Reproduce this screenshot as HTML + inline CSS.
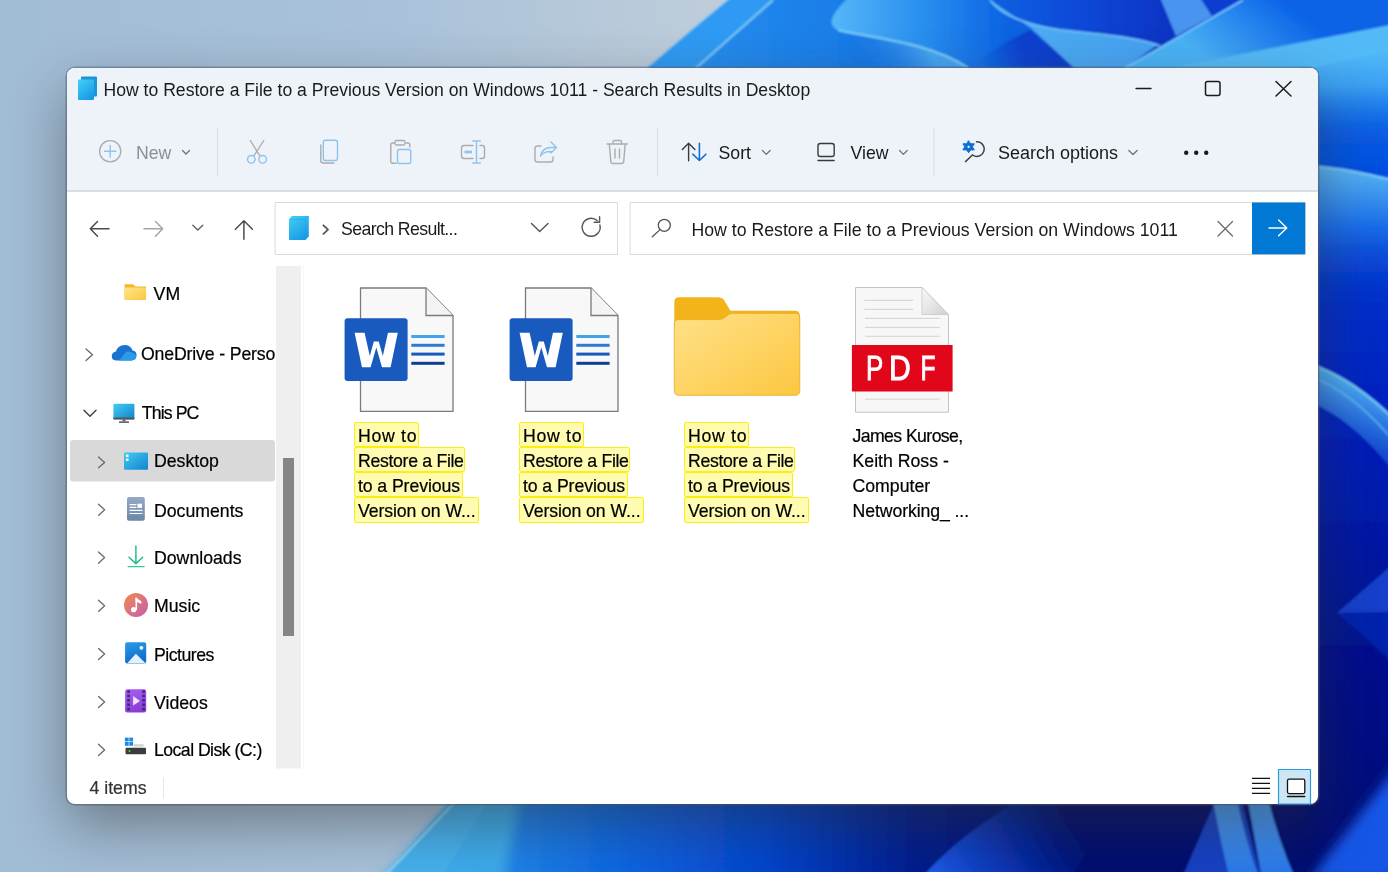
<!DOCTYPE html>
<html><head><meta charset="utf-8">
<style>
*{margin:0;padding:0;box-sizing:border-box}
html,body{width:1388px;height:872px;overflow:hidden;font-family:"Liberation Sans",sans-serif;color:#000;background:#a4bdd7}
svg{position:absolute;left:0;top:0}
#win{position:absolute;left:67px;top:68px;width:1251px;height:736px;border-radius:8px;background:#fff;overflow:hidden;box-shadow:0 22px 56px rgba(48,48,48,.48),0 0 0 1.5px rgba(90,105,135,.55),inset 0 1px 0 #f7fafd}
#top{position:absolute;left:0;top:0;width:1251px;height:124px;background:#eef3f9;border-bottom:2px solid #d9dee3}
.t{position:absolute;white-space:nowrap;font-size:17.7px;line-height:18px;height:18px;color:#1a1a1a}
.b{color:#000;-webkit-text-stroke:0.2px currentColor}
.hl{position:absolute;background:#fffbb0;border:1px solid #fbef10;border-radius:2px}
</style></head><body>
<svg width="1388" height="872" viewBox="0 0 1388 872">
<defs>
<linearGradient id="gl" x1="0" y1="0" x2="720" y2="0" gradientUnits="userSpaceOnUse">
<stop offset="0" stop-color="#a1bcd5"/><stop offset="0.55" stop-color="#a9c2da"/><stop offset="1" stop-color="#bfcdda"/>
</linearGradient>
<linearGradient id="gtop" x1="650" y1="0" x2="1388" y2="0" gradientUnits="userSpaceOnUse">
<stop offset="0" stop-color="#2a92f0"/><stop offset="0.25" stop-color="#1a7ee8"/><stop offset="0.47" stop-color="#0a5ee0"/><stop offset="0.6" stop-color="#0a48d8"/><stop offset="0.7" stop-color="#0838c8"/><stop offset="1" stop-color="#1664e2"/>
</linearGradient>
<linearGradient id="gp1" x1="830" y1="10" x2="1010" y2="10" gradientUnits="userSpaceOnUse">
<stop offset="0" stop-color="#56b8f8"/><stop offset="0.5" stop-color="#2a90f0"/><stop offset="1" stop-color="#0a62e2"/>
</linearGradient>
<linearGradient id="gp1b" x1="840" y1="0" x2="960" y2="0" gradientUnits="userSpaceOnUse"><stop offset="0" stop-color="#1a7ae8" stop-opacity="0"/><stop offset="1" stop-color="#44a4f0"/>
</linearGradient>
<linearGradient id="gp2" x1="990" y1="0" x2="1157" y2="50" gradientUnits="userSpaceOnUse">
<stop offset="0" stop-color="#52aef4"/><stop offset="1" stop-color="#44a2f2"/>
</linearGradient>
<linearGradient id="gp3" x1="1200" y1="55" x2="1260" y2="-20" gradientUnits="userSpaceOnUse">
<stop offset="0" stop-color="#4ab2f6"/><stop offset="0.5" stop-color="#2a8af0"/><stop offset="1" stop-color="#0a62e6"/>
</linearGradient>
<linearGradient id="gright" x1="0" y1="68" x2="0" y2="872" gradientUnits="userSpaceOnUse">
<stop offset="0" stop-color="#0658e4"/><stop offset="0.12" stop-color="#0450e0"/><stop offset="0.3" stop-color="#002ec8"/><stop offset="0.42" stop-color="#0022c0"/><stop offset="0.7" stop-color="#021290"/><stop offset="1" stop-color="#020e72"/>
</linearGradient>
<linearGradient id="gbot" x1="450" y1="0" x2="1388" y2="0" gradientUnits="userSpaceOnUse">
<stop offset="0" stop-color="#3aa2ea"/><stop offset="0.08" stop-color="#1c7ee6"/><stop offset="0.2" stop-color="#0a62e0"/><stop offset="0.34" stop-color="#0544cc"/><stop offset="0.5" stop-color="#031c8c"/><stop offset="0.65" stop-color="#021070"/><stop offset="1" stop-color="#020e72"/>
</linearGradient>
<linearGradient id="gband1" x1="0" y1="166" x2="0" y2="300" gradientUnits="userSpaceOnUse"><stop offset="0" stop-color="#5ab8f5"/><stop offset="0.45" stop-color="#1a6ee8"/><stop offset="1" stop-color="#0a38c8" stop-opacity="0"/></linearGradient>
<linearGradient id="gband2" x1="1340" y1="380" x2="1310" y2="460" gradientUnits="userSpaceOnUse"><stop offset="0" stop-color="#4aaaf2"/><stop offset="1" stop-color="#1a5ee0" stop-opacity=".2"/></linearGradient>
<linearGradient id="gdark" x1="990" y1="0" x2="1160" y2="0" gradientUnits="userSpaceOnUse"><stop offset="0" stop-color="#0a62e2"/><stop offset="0.5" stop-color="#0a4ad8"/><stop offset="1" stop-color="#0a36c6"/></linearGradient>
<filter id="bl2" x="-50%" y="-50%" width="200%" height="200%"><feGaussianBlur stdDeviation="6"/></filter>
<linearGradient id="gp4" x1="935" y1="880" x2="1060" y2="800" gradientUnits="userSpaceOnUse"><stop offset="0" stop-color="#1e5ce8"/><stop offset="0.45" stop-color="#0a3cc0" stop-opacity=".8"/><stop offset="1" stop-color="#0a2ab0" stop-opacity="0"/></linearGradient>
<linearGradient id="gst" x1="0" y1="803" x2="0" y2="872" gradientUnits="userSpaceOnUse"><stop offset="0" stop-color="#4a9cf2"/><stop offset="1" stop-color="#2a78ea"/></linearGradient>
<linearGradient id="gfade" x1="0" y1="50" x2="0" y2="170" gradientUnits="userSpaceOnUse"><stop offset="0" stop-color="#52baf8"/><stop offset="0.3" stop-color="#3aa0f2"/><stop offset="0.7" stop-color="#0a62e4" stop-opacity=".6"/><stop offset="1" stop-color="#0a5ae2" stop-opacity="0"/></linearGradient>
<linearGradient id="gdk2" x1="980" y1="68" x2="1060" y2="40" gradientUnits="userSpaceOnUse"><stop offset="0" stop-color="#0a56dc" stop-opacity="0"/><stop offset="0.5" stop-color="#0a44d2"/><stop offset="1" stop-color="#0a3cc8"/></linearGradient>
<linearGradient id="gp1c" x1="860" y1="75" x2="920" y2="38" gradientUnits="userSpaceOnUse"><stop offset="0" stop-color="#1a7ae8" stop-opacity="0"/><stop offset="1" stop-color="#48a8f2" stop-opacity=".95"/></linearGradient>
<filter id="bl" x="-5%" y="-5%" width="110%" height="110%"><feGaussianBlur stdDeviation="1.2"/></filter>
<radialGradient id="shadow" cx="0.5" cy="0.5" r="0.5"><stop offset="0" stop-color="#000" stop-opacity=".3"/><stop offset="1" stop-color="#000" stop-opacity="0"/></radialGradient>
</defs>
<rect width="1388" height="872" fill="url(#gl)"/>
<g filter="url(#bl)">
<!-- top blue region -->
<path d="M740 -10H1400V120H640L647 68L688 33L729 -1Z" fill="url(#gtop)"/>
<path d="M740 -10L785 -10L696 68L647 68L688 33L729 -1Z" fill="#2f9af3"/>
<path d="M773 0L696 68" stroke="#7ccaf8" stroke-width="2"/>
<path d="M740 -10L729 -1L688 33L647 68" stroke="#8ccff5" stroke-width="1.5" opacity=".6" fill="none"/>
<!-- petal1 upper -->
<path d="M848 -10L846 0C836 10 824 24 838 30C870 38 930 42 968 68L1074 68L1031 28C1010 20 996 10 985 -10Z" fill="url(#gp1)"/>
<!-- petal1 lower band -->

<path d="M838 30C870 38 930 42 968 68H845C842 55 839 40 838 30Z" fill="url(#gp1c)"/>
<path d="M838 30C870 38 930 42 968 68" stroke="#7ad0fa" stroke-width="2" fill="none"/>
<!-- dark zone -->
<path d="M985 -10H1161L1176 36L1157 45C1120 38 1060 30 1031 28Z" fill="url(#gdark)"/>
<path d="M968 68C985 55 1005 42 1030 30L1076 68Z" fill="url(#gdk2)"/>
<!-- petal2 band -->
<path d="M990 0C1000 14 1025 25 1060 30C1100 34 1140 38 1157 45L1125 68H1074L1031 28Z" fill="url(#gp2)"/>
<path d="M990 0C1000 14 1025 25 1060 30C1100 34 1140 38 1160 46" stroke="#6cc0f8" stroke-width="1.8" fill="none"/>
<!-- stripe -->
<path d="M1157 -10H1195L1212 16L1176 36Z" fill="#4a94f0"/>
<path d="M1195 -10H1260L1212 16Z" fill="#0a3ed0"/>
<!-- petal3 -->
<path d="M1125 68L1243 0L1260 -10H1400V100H1125Z" fill="url(#gp3)"/>
<path d="M1170 68L1400 23V110H1170Z" fill="#52baf8"/>
<path d="M1125 68L1243 0" stroke="#7ad0fa" stroke-width="1.5"/>
<!-- right strip -->
<path d="M1300 68H1400V880H1300Z" fill="url(#gright)"/><path d="M1300 71L1400 48V170H1300Z" fill="url(#gfade)"/>
<path d="M1300 166C1330 166 1360 172 1400 182V300H1300Z" fill="url(#gband1)"/>
<path d="M1300 166C1330 166 1360 172 1400 182" stroke="#7ad0fa" stroke-width="2" fill="none"/>
<path d="M1300 361C1340 372 1370 395 1400 425V480C1370 440 1340 412 1300 398Z" fill="url(#gband2)"/>
<path d="M1300 361C1340 372 1370 395 1400 425" stroke="#7ad0fa" stroke-width="2" fill="none"/><path d="M1300 372C1340 385 1370 412 1400 448" stroke="#6ac0f8" stroke-width="1.5" fill="none" opacity=".8"/>
<path d="M1337 613L1400 558V612Z" fill="#1a4ad8" opacity=".8"/><path d="M1337 613L1400 612V668Z" fill="#0a2ec0" opacity=".6"/>
<!-- bottom strip -->
<path d="M460 790H1318V880H380Z" fill="url(#gbot)"/>
<path d="M466 790L521 790L503 880L381 880Z" fill="#3eaaea" filter="url(#bl2)"/><path d="M466 790L495 790L440 880L381 880Z" fill="#44b0ec"/>
<path d="M466 790L381 880" stroke="#90d8f5" stroke-width="2"/>
<path d="M920 880C950 845 990 815 1030 795H1130C1100 830 1080 860 1070 880Z" fill="url(#gp4)"/><path d="M1181 880L1218 795H1240L1262 880Z" fill="#1a50e0" opacity=".75"/>
<path d="M1212 795H1236Q1245 840 1260 880H1230Q1220 840 1212 795Z" fill="url(#gst)"/>
<path d="M1247 795H1267Q1278 840 1296 880H1262Q1255 840 1247 795Z" fill="url(#gst)"/>
<path d="M1310 880C1340 840 1370 800 1400 765V880Z" fill="#1656e6" filter="url(#bl2)"/>
</g>
</svg>
<div id="win"><div id="top"></div></div>
<svg width="1388" height="872" viewBox="0 0 1388 872" fill="none" stroke-linecap="round" stroke-linejoin="round">
<defs>
<linearGradient id="appf" x1="0" y1="0" x2="0.6" y2="1"><stop offset="0" stop-color="#43d0f5"/><stop offset="1" stop-color="#1a9be6"/></linearGradient>
<linearGradient id="fold" x1="0" y1="0" x2="1" y2="1"><stop offset="0" stop-color="#ffe58a"/><stop offset="1" stop-color="#fcc63e"/></linearGradient>
<linearGradient id="mon" x1="0" y1="0" x2="1" y2="1"><stop offset="0" stop-color="#3fd0f0"/><stop offset="1" stop-color="#1580d0"/></linearGradient>
<linearGradient id="docg" x1="0" y1="0" x2="0" y2="1"><stop offset="0" stop-color="#94aac6"/><stop offset="1" stop-color="#6c86a8"/></linearGradient>
<linearGradient id="picg" x1="0" y1="0" x2="0.3" y2="1"><stop offset="0" stop-color="#2a9ce8"/><stop offset="1" stop-color="#0e6ccc"/></linearGradient>
<linearGradient id="vidg" x1="0" y1="0" x2="0.3" y2="1"><stop offset="0" stop-color="#a462f0"/><stop offset="1" stop-color="#8a3ed8"/></linearGradient>
<linearGradient id="mus" x1="0" y1="0" x2="1" y2="1"><stop offset="0" stop-color="#f28a50"/><stop offset="1" stop-color="#c55bb0"/></linearGradient>
</defs>
<!-- title app icon -->
<rect x="81" y="76.5" width="16" height="20" rx="1" fill="#1a96d8"/>
<rect x="78" y="79.5" width="16" height="20.5" rx="1" fill="url(#appf)"/>
<!-- window controls -->
<path d="M1136 88.5H1151" stroke="#1b1b1b" stroke-width="1.3"/>
<rect x="1205.5" y="81.5" width="14.5" height="14" rx="2" stroke="#1b1b1b" stroke-width="1.5"/>
<path d="M1276 81.5L1291 96M1291 81.5L1276 96" stroke="#1b1b1b" stroke-width="1.5"/>
<!-- New -->
<circle cx="110.2" cy="151.2" r="10.6" stroke="#a9acb0" stroke-width="1.3"/>
<path d="M110.2 145.5V157M104.5 151.2H116" stroke="#8ec3ee" stroke-width="1.4"/>
<path d="M182.5 150.5L186 154L189.5 150.5" stroke="#6a6d70" stroke-width="1.2"/>
<path d="M217.5 128V176" stroke="#d9dee4" stroke-width="1.2"/>
<!-- cut -->
<path d="M250.3 140.5L260 156M263.8 140.5L253.8 156" stroke="#a9a9a9" stroke-width="1.3"/>
<circle cx="251.3" cy="159.3" r="3.8" stroke="#8ec3ee" stroke-width="1.4"/>
<circle cx="262.7" cy="159.3" r="3.8" stroke="#8ec3ee" stroke-width="1.4"/>
<!-- copy -->
<path d="M320.8 145V160.5Q320.8 163 323.5 163H334" stroke="#acacac" stroke-width="1.4"/>
<rect x="323.3" y="140.2" width="14.2" height="20.3" rx="2.3" stroke="#8ec3ee" stroke-width="1.4"/>
<!-- paste -->
<path d="M394.5 143H392.5Q390.8 143 390.8 145V161.5Q390.8 163.3 392.5 163.3H396M406 143H408Q409.8 143 409.8 145V147" stroke="#acacac" stroke-width="1.4"/>
<rect x="395" y="140.5" width="10" height="4.5" rx="1.5" stroke="#acacac" stroke-width="1.3"/>
<rect x="397.5" y="149.5" width="13.3" height="14" rx="2" stroke="#8ec3ee" stroke-width="1.4"/>
<!-- rename -->
<path d="M473 145.5H464Q461.5 145.5 461.5 148V156Q461.5 158.5 464 158.5H473M480 145.5H482Q484.5 145.5 484.5 148V156Q484.5 158.5 482 158.5H480" stroke="#acacac" stroke-width="1.4"/>
<path d="M476.5 141V163M472.8 141H480.2M472.8 163H480.2" stroke="#8ec3ee" stroke-width="1.5"/>
<path d="M464.5 152H472" stroke="#8ec3ee" stroke-width="2.6" stroke-linecap="butt"/>
<!-- share -->
<path d="M541 146H537.5Q535 146 535 148.5V159.5Q535 162 537.5 162H550.5Q553 162 553 159.5V157" stroke="#acacac" stroke-width="1.4"/>
<path d="M551 142L556.5 147.5L551 153M556 147.5H551Q542.5 147.5 540.5 156Q543.5 151.5 551 151.5" stroke="#8ec3ee" stroke-width="1.4"/>
<!-- delete -->
<path d="M607 144H627.5M613 144V142Q613 140.5 614.5 140.5H620Q621.5 140.5 621.5 142V144M609.3 144L610.8 161.5Q611 163.5 613 163.5H621.5Q623.5 163.5 623.7 161.5L625.2 144M615 149V158M619.5 149V158" stroke="#acacac" stroke-width="1.4"/>
<path d="M657.5 128V176" stroke="#d9dee4" stroke-width="1.2"/>
<!-- sort -->
<path d="M688.6 143.3V160.7M682.3 149.6L688.6 143.3L694.9 149.6" stroke="#3a3a3a" stroke-width="1.4"/>
<path d="M699.4 143.3V160.5M692.8 154.2L699.4 160.5L705.9 154.2" stroke="#0f6fd4" stroke-width="1.6"/>
<path d="M762.5 150.5L766.3 154.3L770.1 150.5" stroke="#6a6d70" stroke-width="1.2"/>
<!-- view -->
<rect x="818" y="143.5" width="16.2" height="13" rx="2.3" stroke="#3a3a3a" stroke-width="1.4"/>
<path d="M818 160.5H834.2" stroke="#3a3a3a" stroke-width="1.4"/>
<path d="M899.6 150.5L903.4 154.3L907.2 150.5" stroke="#6a6d70" stroke-width="1.2"/>
<path d="M933.9 128V176" stroke="#d9dee4" stroke-width="1.2"/>
<!-- search options -->
<path d="M976.5 141.8A7.3 7.3 0 1 1 972.6 155" stroke="#444" stroke-width="1.5"/>
<path d="M972.4 155L965.5 161.6" stroke="#444" stroke-width="1.5"/>
<path d="M968.6 140.9L970.7 143.8L974.3 143.8L972.4 146.8L974.3 149.9L970.7 149.9L968.6 152.7L966.5 149.9L962.9 149.9L964.8 146.8L962.9 143.8L966.5 143.8Z" fill="#0f6fd4" stroke="#0f6fd4" stroke-width="1"/>
<circle cx="968.6" cy="146.8" r="1.1" fill="#fff"/>
<path d="M1128.8 150.5L1133 154.5L1137.2 150.5" stroke="#6a6d70" stroke-width="1.2"/>
<!-- more dots -->
<circle cx="1186.2" cy="152.8" r="2.2" fill="#1b1b1b"/>
<circle cx="1196.2" cy="152.8" r="2.2" fill="#1b1b1b"/>
<circle cx="1206.2" cy="152.8" r="2.2" fill="#1b1b1b"/>
<!-- nav arrows -->
<path d="M90.5 228.8H109M97.5 221.5L90.3 228.8L97.5 236.2" stroke="#4c4c4c" stroke-width="1.5"/>
<path d="M144 228.8H162.5M155.5 221.5L162.7 228.8L155.5 236.2" stroke="#a6a6a6" stroke-width="1.5"/>
<path d="M192.8 225.3L197.8 230L202.8 225.3" stroke="#5a5a5a" stroke-width="1.3"/>
<path d="M243.9 221V239.2M235.4 229.3L243.9 220.8L252.4 229.3" stroke="#4c4c4c" stroke-width="1.5"/>
<!-- address box -->
<rect x="275.5" y="202.5" width="342" height="52" fill="#fff" stroke="#dadada" stroke-width="1"/>
<path d="M289 219.4L291.9 216H308.8V236.3L305.6 239.9H289Z" fill="url(#appf)"/>
<path d="M289 219.4H305.6V239.9M305.6 219.4L308.8 216" stroke="#1aa0e0" stroke-width=".7" opacity=".6"/>
<path d="M323.4 225.3L328 229.6L323.4 233.9" stroke="#555" stroke-width="1.8"/>
<path d="M531.5 223.5L539.7 231.5L548 223.5" stroke="#555" stroke-width="1.4"/>
<path d="M599.9 225A9 9 0 1 1 597.2 220.6M599.6 216.8V222.3H594.2" stroke="#555" stroke-width="1.4"/>
<!-- search box -->
<rect x="630.5" y="202.5" width="675" height="52" fill="#fff" stroke="#dadada" stroke-width="1"/>
<rect x="1252" y="202.5" width="53.2" height="51.8" fill="#0078d4"/>
<circle cx="664.3" cy="225.3" r="6" stroke="#555" stroke-width="1.3"/>
<path d="M660 229.6L652.3 236.8" stroke="#555" stroke-width="1.3"/>
<path d="M1218 221.5L1232.5 236M1232.5 221.5L1218 236" stroke="#6a6a6a" stroke-width="1.3"/>
<path d="M1269 228H1286.8M1278.6 220L1286.8 228L1278.6 235.8" stroke="#fff" stroke-width="1.4"/>
<!-- nav pane scrollbar -->
<rect x="276" y="266" width="25" height="502.5" fill="#efefef"/>
<rect x="283" y="458" width="11" height="178" fill="#858585"/>
<path d="M303.5 266V768" stroke="#f6f6f6" stroke-width="1"/>
<!-- desktop selection -->
<rect x="70" y="440" width="205" height="41.5" rx="3" fill="#d9d9d9"/>
<!-- VM folder -->
<path d="M124.6 284.2H133L135.5 286.5H146V300H124.6Z" fill="#f4b728"/>
<rect x="124.6" y="287.5" width="21.5" height="12.6" rx="1" fill="url(#fold)"/>
<!-- onedrive -->
<path d="M86 349L92.5 354.8L86 360.6" stroke="#6a6a6a" stroke-width="1.3"/>
<path d="M116 351.5Q118 344.5 125.5 345Q131 345.5 132.5 350.5Q137 351 136.5 356Q136 360.4 131.5 360.4H116Q111.5 360.4 111.8 356Q112 352 116 351.5Z" fill="#1b72d0"/>
<path d="M119 360.4L126 352Q130 350 136.3 355.5Q136 360.4 131.5 360.4Z" fill="#2b9ae8"/>
<!-- this pc -->
<path d="M84 410.3L90 416.3L96 410.3" stroke="#444" stroke-width="1.5"/>
<rect x="113.4" y="403.8" width="21" height="15.6" rx="1" fill="url(#mon)"/>
<path d="M113.4 417.5H134.4V419.4H113.4Z" fill="#555"/>
<rect x="122.5" y="419.4" width="3" height="2" fill="#666"/>
<rect x="119" y="421.4" width="10" height="1.5" fill="#555"/>
<!-- desktop -->
<path d="M98.5 457L104.6 462.4L98.5 467.8" stroke="#6a6a6a" stroke-width="1.3"/>
<rect x="124" y="452.4" width="24" height="17.3" rx="1" fill="url(#mon)"/>
<rect x="126" y="454.5" width="2.5" height="2.5" fill="#fff"/>
<rect x="126" y="458.5" width="2.5" height="2.5" fill="#fff"/>
<!-- documents -->
<path d="M98.5 504.2L104.6 509.8L98.5 515.4" stroke="#6a6a6a" stroke-width="1.3"/>
<rect x="127" y="497" width="17.8" height="23.7" rx="2" fill="url(#docg)"/>
<path d="M130 504.6H136M130 507.3H136M130 510.4H142M130 513.5H142" stroke="#fff" stroke-width="1.2"/>
<rect x="137.4" y="503.7" width="4.6" height="4.2" fill="#fff"/>
<!-- downloads -->
<path d="M98.5 552L104.6 557.6L98.5 563.2" stroke="#6a6a6a" stroke-width="1.3"/>
<path d="M135.9 546V563M129 557.2L135.9 563.6L142.7 557.2" stroke="#2cba8c" stroke-width="1.5"/>
<path d="M128.1 566.6H144.1" stroke="#34c8a0" stroke-width="1.4"/>
<!-- music -->
<path d="M98.5 600.2L104.6 605.8L98.5 611.4" stroke="#6a6a6a" stroke-width="1.3"/>
<circle cx="136" cy="605" r="12" fill="url(#mus)"/>
<path d="M136.3 598.2V609.5" stroke="#fff" stroke-width="1.6"/>
<circle cx="133.6" cy="609.7" r="2.6" fill="#fff"/>
<path d="M135.5 597.5L141.3 601.2V603.8L135.5 601.5Z" fill="#fff"/>
<!-- pictures -->
<path d="M98.5 648.4L104.6 654L98.5 659.6" stroke="#6a6a6a" stroke-width="1.3"/>
<rect x="125.1" y="642.3" width="21.1" height="21.3" rx="2" fill="url(#picg)"/>
<path d="M127.2 663.3L135.9 653.7L145.5 663.3Z" fill="#e2f1fc"/>
<circle cx="141.4" cy="647.8" r="1.9" fill="#fff"/>
<!-- videos -->
<path d="M98.5 696.4L104.6 702L98.5 707.6" stroke="#6a6a6a" stroke-width="1.3"/>
<rect x="125.1" y="689.2" width="21.1" height="23.3" rx="2.2" fill="url(#vidg)"/>
<g fill="#4a2484"><rect x="127.2" y="690.3" width="2.8" height="2.6"/><rect x="127.2" y="694.6" width="2.8" height="2.6"/><rect x="127.2" y="699" width="2.8" height="2.6"/><rect x="127.2" y="703.4" width="2.8" height="2.6"/><rect x="127.2" y="707.8" width="2.8" height="2.6"/>
<rect x="142.2" y="690.3" width="2.8" height="2.6"/><rect x="142.2" y="694.6" width="2.8" height="2.6"/><rect x="142.2" y="699" width="2.8" height="2.6"/><rect x="142.2" y="703.4" width="2.8" height="2.6"/><rect x="142.2" y="707.8" width="2.8" height="2.6"/></g>
<path d="M133.1 696L140 700.9L133.1 705.4Z" fill="#ece4f4"/>
<!-- local disk -->
<path d="M98.5 744.3L104.6 749.9L98.5 755.5" stroke="#6a6a6a" stroke-width="1.3"/>
<g fill="#1a8ae6"><rect x="124.9" y="737.6" width="3.8" height="3.8"/><rect x="129.3" y="737.6" width="3.8" height="3.8"/><rect x="124.9" y="742" width="3.8" height="3.8"/><rect x="129.3" y="742" width="3.8" height="3.8"/></g>
<rect x="133.6" y="744.2" width="10" height="2.4" fill="#d4d4d4"/>
<rect x="125.5" y="747.8" width="20.5" height="6.4" rx="1" fill="#3c3c3c"/>
<circle cx="129.5" cy="751" r="1" fill="#30e060"/>
<!-- status -->
<path d="M163.5 778V798" stroke="#e6e6e6" stroke-width="1"/>
<path d="M1252 778.3H1270M1252 783.4H1270M1252 788.4H1270M1252 793.4H1270" stroke="#111" stroke-width="1.3" stroke-linecap="butt"/>
<rect x="1278.5" y="769.5" width="32" height="34.5" fill="#cce6f6" stroke="#2a9be0" stroke-width="1.2"/>
<rect x="1287.5" y="779.2" width="17.3" height="14.4" rx="1.5" fill="#fff" stroke="#111" stroke-width="1.3"/>
<path d="M1287.5 796.5H1304.8" stroke="#111" stroke-width="1.3"/>
</svg>
<!-- content icons -->
<svg width="1388" height="872" viewBox="0 0 1388 872">
<defs>
<linearGradient id="fold2" x1="0" y1="0" x2="1" y2="1"><stop offset="0" stop-color="#ffe189"/><stop offset="1" stop-color="#fcc740"/></linearGradient>
</defs>
<!-- word 1 -->
<g id="word">
<path d="M360.5 288H426L453 315.5V411.3H360.5Z" fill="#f8f8f8" stroke="#7a7a7a" stroke-width="1.3"/>
<path d="M426 288V315.5H453" fill="#f4f4f4" stroke="#7a7a7a" stroke-width="1.3"/>
<rect x="344.6" y="318.3" width="63" height="62.6" rx="3" fill="#185abd"/>
<path d="M354.6 332.7H364.6L369.8 356L373.8 341.5H378.8L382.8 356L388 332.7H397.8L390.6 367.3H382L376.3 347.5L370.6 367.3H362Z" fill="#fff"/>
<rect x="411.3" y="335" width="33.3" height="3" fill="#41a5ee"/>
<rect x="411.3" y="343.8" width="33.3" height="3" fill="#2b7cd3"/>
<rect x="411.3" y="352.6" width="33.3" height="3" fill="#185abd"/>
<rect x="411.3" y="361.8" width="33.3" height="3" fill="#103f91"/>
</g>
<use href="#word" x="165" y="0"/>
<!-- folder -->
<path d="M674.3 302Q674.3 297.2 679 297.2H718Q722 297.2 724 300L730.4 310.8H795Q799.8 310.8 799.8 315.5V330H674.3Z" fill="#f2b418"/>

<path d="M674.3 324Q674.3 319.6 679 319.6H718Q723 319.6 726 316.5Q728.5 313.3 733 313.3H795Q799.8 313.3 799.8 318V390.5Q799.8 395.3 795 395.3H679Q674.3 395.3 674.3 390.5Z" fill="url(#fold2)" stroke="#eaa822" stroke-width=".8"/>
<!-- pdf -->
<defs><linearGradient id="pfold" x1="0" y1="0" x2="1" y2="1"><stop offset="0" stop-color="#fafafa"/><stop offset="1" stop-color="#d0d0d0"/></linearGradient></defs>
<path d="M855.5 287.5H922L948.5 314.5V412.2H855.5Z" fill="#f7f7f7" stroke="#c4c4c4" stroke-width="1"/>
<path d="M922 287.5V314.5H948.5Z" fill="url(#pfold)" stroke="#c8c8c8" stroke-width=".8"/>
<path d="M864.2 300.4H913.4M864.2 309.4H913.4M865 318.4H939.6M865 327.4H939.6M865 336.3H939.6M865 399.2H939.6" stroke="#d2d2d2" stroke-width="1"/>
<rect x="851.9" y="345" width="100.7" height="46.5" fill="#e2061a"/>
<g fill="#fff" stroke="#fff" stroke-width="1" font-family="Liberation Sans" font-size="35">
<text x="866" y="380.4" transform="translate(866 0) scale(0.74 1) translate(-866 0)">P</text>
<text x="889" y="380.4" transform="translate(889 0) scale(0.86 1) translate(-889 0)">D</text>
<text x="920.5" y="380.4" transform="translate(920.5 0) scale(0.7 1) translate(-920.5 0)">F</text>
</g>
</svg>
<div class="t" style="left:103.5px;top:81px;font-size:17.6px">How to Restore a File to a Previous Version on Windows 1011 - Search Results in Desktop</div>
<div class="t" style="left:136px;top:144px;color:#8b8f93">New</div>
<div class="t" style="left:718.5px;top:144px">Sort</div>
<div class="t" style="left:850.5px;top:144px">View</div>
<div class="t" style="left:998px;top:144px;font-size:18px">Search options</div>
<div class="t" style="left:341px;top:220px;letter-spacing:-0.6px">Search Result...</div>
<div class="t" style="left:691.5px;top:221.3px">How to Restore a File to a Previous Version on Windows 1011</div>
<div class="t b" style="left:153.6px;top:284.5px">VM</div>
<div style="position:absolute;left:141px;top:340px;width:134px;height:30px;overflow:hidden"><div class="t b" style="left:0;top:4.6px;letter-spacing:-0.15px">OneDrive - Perso</div></div>
<div class="t b" style="left:141.8px;top:404.4px;letter-spacing:-0.9px">This PC</div>
<div class="t b" style="left:154px;top:452px">Desktop</div>
<div class="t b" style="left:154px;top:501.6px">Documents</div>
<div class="t b" style="left:154px;top:549px">Downloads</div>
<div class="t b" style="left:154px;top:597.4px">Music</div>
<div class="t b" style="left:154px;top:646px;letter-spacing:-0.5px">Pictures</div>
<div class="t b" style="left:154px;top:694px">Videos</div>
<div class="t b" style="left:154px;top:741.2px;letter-spacing:-0.55px">Local Disk (C:)</div>
<div class="t b" style="left:89.5px;top:779px;color:#333">4 items</div>
<div class="hl" style="left:354px;top:422px;width:65.0px;height:25.0px"></div>
<div class="hl" style="left:354px;top:447px;width:110.5px;height:25.4px"></div>
<div class="hl" style="left:354px;top:472px;width:108.5px;height:25.3px"></div>
<div class="hl" style="left:354px;top:497px;width:124.6px;height:26.0px"></div>
<div class="t b" style="left:358px;top:426.7px;letter-spacing:0.7px">How to</div>
<div class="t b" style="left:358px;top:451.7px;letter-spacing:-0.32px">Restore a File</div>
<div class="t b" style="left:358px;top:476.7px;letter-spacing:-0.1px">to a Previous</div>
<div class="t b" style="left:358px;top:501.7px;letter-spacing:-0.1px">Version on W...</div>
<div class="hl" style="left:519px;top:422px;width:65.0px;height:25.0px"></div>
<div class="hl" style="left:519px;top:447px;width:110.5px;height:25.4px"></div>
<div class="hl" style="left:519px;top:472px;width:108.5px;height:25.3px"></div>
<div class="hl" style="left:519px;top:497px;width:124.6px;height:26.0px"></div>
<div class="t b" style="left:523px;top:426.7px;letter-spacing:0.7px">How to</div>
<div class="t b" style="left:523px;top:451.7px;letter-spacing:-0.32px">Restore a File</div>
<div class="t b" style="left:523px;top:476.7px;letter-spacing:-0.1px">to a Previous</div>
<div class="t b" style="left:523px;top:501.7px;letter-spacing:-0.1px">Version on W...</div>
<div class="hl" style="left:684px;top:422px;width:65.0px;height:25.0px"></div>
<div class="hl" style="left:684px;top:447px;width:110.5px;height:25.4px"></div>
<div class="hl" style="left:684px;top:472px;width:108.5px;height:25.3px"></div>
<div class="hl" style="left:684px;top:497px;width:124.6px;height:26.0px"></div>
<div class="t b" style="left:688px;top:426.7px;letter-spacing:0.7px">How to</div>
<div class="t b" style="left:688px;top:451.7px;letter-spacing:-0.32px">Restore a File</div>
<div class="t b" style="left:688px;top:476.7px;letter-spacing:-0.1px">to a Previous</div>
<div class="t b" style="left:688px;top:501.7px;letter-spacing:-0.1px">Version on W...</div>
<div class="t b" style="left:852.5px;top:426.7px;letter-spacing:-0.6px">James Kurose,</div>
<div class="t b" style="left:852.5px;top:451.7px;letter-spacing:0px">Keith Ross -</div>
<div class="t b" style="left:852.5px;top:476.7px;letter-spacing:0px">Computer</div>
<div class="t b" style="left:852.5px;top:501.7px;letter-spacing:-0.1px">Networking_ ...</div>
</body></html>
